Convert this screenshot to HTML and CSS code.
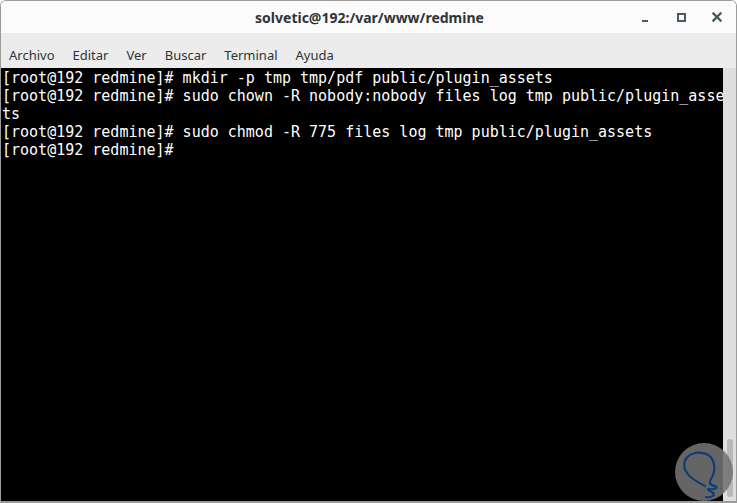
FILE: index.html
```html
<!DOCTYPE html>
<html lang="es">
<head>
<meta charset="UTF-8">
<title>solvetic@192:/var/www/redmine</title>
<link rel="stylesheet" href="styles.css">
</head>
<body>
<div class="window">
  <div class="titlebar">
    <span class="title">solvetic@192:/var/www/redmine</span>
    <div class="controls">
      <span class="btn btn-min"></span>
      <span class="btn btn-max"></span>
      <span class="btn btn-close">
        <svg width="10" height="10" viewBox="0 0 10 10"><path d="M1.5 1.5 L8.5 8.5 M8.5 1.5 L1.5 8.5" stroke="#4b5a62" stroke-width="2.4" stroke-linecap="square"/></svg>
      </span>
    </div>
  </div>
  <div class="menubar">
    <span>Archivo</span>
    <span>Editar</span>
    <span>Ver</span>
    <span>Buscar</span>
    <span>Terminal</span>
    <span>Ayuda</span>
  </div>
  <div class="terminal">
    <pre class="screen">[root@192 redmine]# mkdir -p tmp tmp/pdf public/plugin_assets
[root@192 redmine]# sudo chown -R nobody:nobody files log tmp public/plugin_asse
ts
[root@192 redmine]# sudo chmod -R 775 files log tmp public/plugin_assets
[root@192 redmine]# </pre>
    <div class="scrollbar">
      <div class="slider"></div>
    </div>
  </div>
  <div class="badge">
    <svg width="58" height="58" viewBox="0 0 58 58">
      <circle cx="29" cy="29" r="29" fill="#737373" fill-opacity="0.88"/>
      <path d="M30 43 C24 40 16 36 12 30 C7 23 9 14 17 11 C25 8 35 10 38 18 C41 25 39 31 36 36 C34 39 34 42 40 43 C44 44 40 47 34 46 C31 45.5 35 48 38 50 C41 52 36 55 31 54" fill="none" stroke="#0c3f78" stroke-width="2.2" stroke-linecap="round" stroke-linejoin="round"/>
    </svg>
  </div>
</div>
</body>
</html>
```
FILE: styles.css
```css
html, body {
  margin: 0;
  height: 100%;
  background: #ffffff;
}

.window {
  position: relative;
  box-sizing: border-box;
  height: 503px;
  border: 1px solid #9b9b9b;
  border-bottom-width: 2px;
  border-radius: 6px 6px 0 0;
  display: flex;
  flex-direction: column;
  overflow: hidden;
  font-family: "Noto Sans", "DejaVu Sans", sans-serif;
  color: #2e3436;
}

.titlebar {
  height: 32px;
  background: #fbfbfb;
  display: flex;
  align-items: center;
  justify-content: center;
  position: relative;
}

.title {
  font-size: 14px;
  font-weight: bold;
  color: #2e3436;
  padding-left: 2px;
}

.controls {
  position: absolute;
  right: 1px;
  top: 0;
  height: 32px;
  display: flex;
  align-items: center;
}

.btn {
  width: 36px;
  height: 32px;
  display: flex;
  align-items: center;
  justify-content: center;
}

.btn-min::before {
  content: "";
  width: 6px;
  height: 2px;
  background: #4b5a62;
  margin-top: 7px;
}

.btn-max::before {
  content: "";
  width: 5px;
  height: 5px;
  border: 2px solid #4b5a62;
}

.menubar {
  height: 35px;
  background: #ececec;
  display: flex;
  align-items: center;
  gap: 18px;
  padding-left: 8px;
  font-size: 13px;
  padding-top: 8px;
  box-sizing: border-box;
}

.terminal {
  flex: 1;
  display: flex;
  min-height: 0;
}

.screen {
  flex: 1;
  margin: 0;
  padding: 1px 0 0 1px;
  background: #000000;
  color: #ffffff;
  font-family: "DejaVu Sans Mono", monospace;
  font-size: 15px;
  line-height: 18px;
  white-space: pre;
  overflow: hidden;
}

.scrollbar {
  width: 13px;
  background: #dedede;
  display: flex;
  flex-direction: column;
  justify-content: flex-end;
  align-items: center;
  padding-bottom: 4px;
}

.slider {
  width: 6px;
  height: 58px;
  border-radius: 3px;
  background: #b8b8b8;
  margin-left: 1px;
}

.badge {
  position: absolute;
  right: 3px;
  bottom: 0;
  width: 58px;
  height: 58px;
}

.badge svg {
  display: block;
}
```
